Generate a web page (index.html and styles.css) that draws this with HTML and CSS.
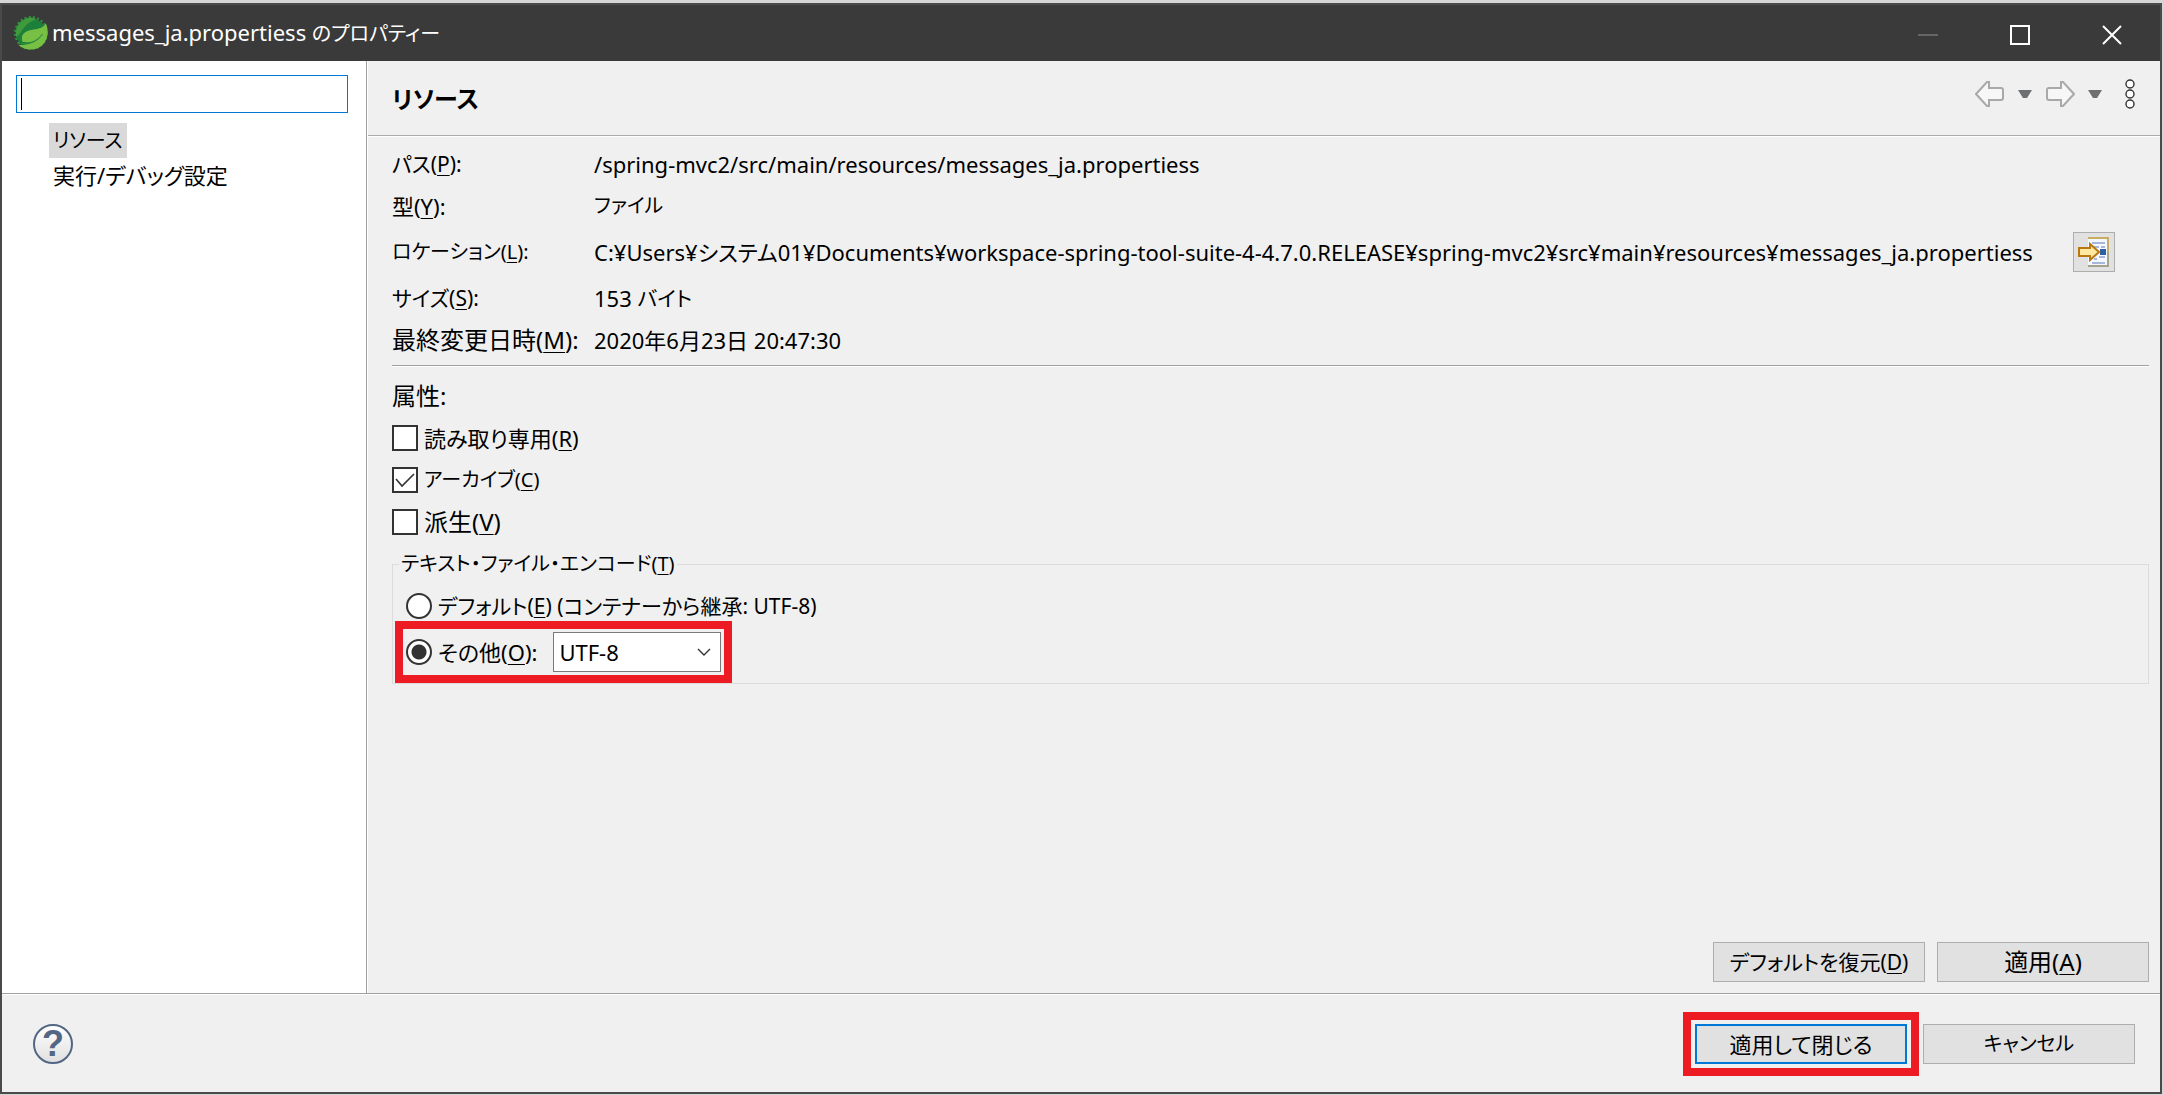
FILE: index.html
```
<!DOCTYPE html>
<html lang="ja">
<head>
  <meta charset="UTF-8" />
  <title>messages_ja.propertiess のプロパティー</title>
  <link rel="stylesheet" href="styles.css">
</head>
<body>

  <div class="dialog">
    <header class="titlebar">
      <svg class="logo" viewBox="0 0 32 32" aria-hidden="true">
        <circle cx="16" cy="16" r="14" fill="#1d7f3c" />
        <circle cx="16" cy="16" r="15" fill="none" stroke="#2f8f3c" stroke-width="2" stroke-dasharray="2 2" />
        <path d="M2 20 Q0 8 10 3 Q16 0 21 3 Q12 6 8 13 Q5 18 2 20 Z" fill="#3f9a3c" />
        <path d="M30 7 C33 14 32 22 27 27 C20 34 9 32 4 27 C12 28 21 26 27 17 C22 24 14 26 8 24 C6 17 11 14 18 13 C24 12 28 11 30 7 Z" fill="#78c043" />
        <path d="M27 17 C22 24 14 26 8 24 C6 17 11 14 18 13 C24 12 28 11 30 7 L31 15 Z" fill="#78c043" />
        <path d="M4 26 C14 27 22 24 27 17" fill="none" stroke="#2f8f3c" stroke-width="1" />
      </svg>
      <h1>messages_ja.propertiess <span class="kana">のプロパティー</span></h1>
      <div class="window-buttons">
        <button type="button" aria-label="最小化" disabled><svg viewBox="0 0 20 20"><path d="M0 10H20" stroke="#666" stroke-width="2" /></svg></button>
        <button type="button" aria-label="最大化"><svg viewBox="0 0 20 20"><rect x="1" y="1" width="18" height="18" fill="none" stroke="#fff" stroke-width="2" /></svg></button>
        <button type="button" aria-label="閉じる"><svg viewBox="0 0 20 20"><path d="M1 1L19 19M19 1L1 19" stroke="#fff" stroke-width="2" /></svg></button>
      </div>
    </header>

    <div class="body">
      <nav class="sidebar">
        <div class="filter"><input type="text" aria-label="フィルター入力"></div>
        <ul>
          <li><a href="#resource" class="selected kana">リソース</a></li>
          <li><a href="#debug">実行/デバッグ設定</a></li>
        </ul>
      </nav>

      <main id="resource">
        <div class="page-head">
          <h2>リソース</h2>
          <div class="toolbar">
            <button type="button" aria-label="戻る">
              <svg width="30" height="26" viewBox="0 0 30 26"><path d="M1 13L12 1H14V7H26Q28 7 28 9V17Q28 19 26 19H14V25H12Z" fill="#f7f7f7" stroke="#a9a9a9" stroke-width="2" /></svg>
            </button>
            <button type="button" aria-label="戻る履歴">
              <svg width="14" height="8" viewBox="0 0 14 8"><path d="M0 0H14L9 8H5Z" fill="#6e6f71" /></svg>
            </button>
            <button type="button" aria-label="進む">
              <svg width="30" height="26" viewBox="0 0 30 26"><path d="M29 13L18 1H16V7H4Q2 7 2 9V17Q2 19 4 19H16V25H18Z" fill="#f7f7f7" stroke="#a9a9a9" stroke-width="2" /></svg>
            </button>
            <button type="button" aria-label="進む履歴">
              <svg width="14" height="8" viewBox="0 0 14 8"><path d="M0 0H14L9 8H5Z" fill="#6e6f71" /></svg>
            </button>
            <button type="button" class="menu" aria-label="メニュー">
              <svg width="10" height="30" viewBox="0 0 10 30" fill="#fff" stroke="#333" stroke-width="1.4"><circle cx="5" cy="5" r="4" /><circle cx="5" cy="15" r="4" /><circle cx="5" cy="25" r="4" /></svg>
            </button>
          </div>
        </div>

        <div class="page">
          <dl class="info">
            <dt class="mixed">パス(<u>P</u>):</dt>
            <dd>/spring-mvc2/src/main/resources/messages_ja.propertiess</dd>
            <dt>型(<u>Y</u>):</dt>
            <dd class="kana">ファイル</dd>
            <dt class="tall kana">ロケーション(<u>L</u>):</dt>
            <dd class="tall location">
              <span>C:¥Users¥システム01¥Documents¥workspace-spring-tool-suite-4-4.7.0.RELEASE¥spring-mvc2¥src¥main¥resources¥messages_ja.propertiess</span>
              <button type="button" class="show-in" aria-label="システム・エクスプローラーに表示">
                <svg width="34" height="32" viewBox="0 0 34 32">
                  <rect x="11" y="1" width="21" height="30" fill="#f4f7fc" />
                  <path d="M11 2H31V31" fill="none" stroke="#c8ad62" stroke-width="2" />
                  <path d="M31 16V30H11" fill="none" stroke="#a6a38c" stroke-width="2" />
                  <path d="M15 7H28M17 11H22M24 11H28M22 21H28M17 23H20M15 27H28" stroke="#a8b6dc" stroke-width="2" />
                  <path d="M23 16H29" stroke="#2e5fa3" stroke-width="6" />
                  <path d="M2 12H13V8L22 16L13 24V20H2Z" fill="#ffe9a0" stroke="#b8780f" stroke-width="2" />
                </svg>
              </button>
            </dd>
            <dt class="mixed">サイズ(<u>S</u>):</dt>
            <dd>153 <span class="mixed">バイト</span></dd>
            <dt class="kanji">最終変更日時(<u>M</u>):</dt>
            <dd>2020年6月23日 20:47:30</dd>
          </dl>

          <div class="attributes">
            <p class="kanji">属性:</p>
            <label><input type="checkbox"><span>読み取り専用(<u>R</u>)</span></label>
            <label><input type="checkbox" checked><span class="kana">アーカイブ(<u>C</u>)</span></label>
            <label><input type="checkbox"><span class="kanji">派生(<u>V</u>)</span></label>
          </div>

          <fieldset>
            <legend class="kana">テキスト・ファイル・エンコード(<u>T</u>)</legend>
            <label><input type="radio" name="encoding"><span class="mixed">デフォルト(<u>E</u>) (コンテナーから継承: UTF-8)</span></label>
            <div class="other highlight">
              <label><input type="radio" name="encoding" checked><span>その他(<u>O</u>):</span></label>
              <select aria-label="エンコード">
                <option>UTF-8</option>
                <option>UTF-16</option>
                <option>US-ASCII</option>
              </select>
            </div>
          </fieldset>

          <div class="page-buttons">
            <button type="button" class="btn mixed">デフォルトを復元(<u>D</u>)</button>
            <button type="button" class="btn kanji">適用(<u>A</u>)</button>
          </div>
        </div>
      </main>
    </div>

    <footer>
      <button type="button" class="help" aria-label="ヘルプ">?</button>
      <div class="footer-buttons">
        <button type="button" class="btn primary highlight">適用して閉じる</button>
        <button type="button" class="btn kana">キャンセル</button>
      </div>
    </footer>
  </div>

</body>
</html>
```
FILE: styles.css
```
* {
  box-sizing: border-box;
}
body {
  margin: 0;
  padding: 3px 1px 1px 0;
  height: 100vh;
  background: #d6d6d6;
  color: #000;
  font-family: "Noto Sans", "Noto Sans CJK JP", sans-serif;
  font-size: 22px;
  line-height: 30px;
  font-feature-settings: "palt";
}
h1, h2, ul, dl, dd, p {
  margin: 0;
  padding: 0;
  font-weight: normal;
}
button, input, select {
  font: inherit;
  font-feature-settings: inherit;
  color: inherit;
}
button {
  padding: 0;
  border: none;
  background: none;
}
u {
  text-underline-offset: 3px;
  text-decoration-thickness: 1px;
}
.kana {
  font-size: 20px;
}
.mixed {
  font-size: 21px;
}
.kanji {
  font-size: 24px;
}

.dialog {
  display: flex;
  flex-direction: column;
  height: 100%;
  border: 2px solid #4a4a4a;
  background: #f0f0f0;
}

/* title bar */
.titlebar {
  display: flex;
  align-items: center;
  height: 56px;
  padding-left: 12px;
  background: #3a3a3a;
  color: #fff;
}
.logo {
  width: 34px;
  height: 34px;
}
.titlebar h1 {
  flex: 1;
  margin-left: 4px;
  font-size: 22px;
}
.titlebar h1 .kana {
  font-size: 20px;
}
.window-buttons {
  display: flex;
  padding-right: 2px;
}
.window-buttons button {
  width: 92px;
  height: 56px;
  padding-bottom: 2px;
}
.window-buttons svg {
  width: 20px;
  height: 20px;
  vertical-align: middle;
}

.body {
  display: flex;
  flex: 1;
  min-height: 0;
}

/* left tree */
.sidebar {
  width: 365px;
  padding: 14px 18px 0 14px;
  background: #fff;
  border-right: 1px solid #a0a0a0;
}
.filter {
  position: relative;
}
.filter input {
  display: block;
  width: 100%;
  height: 38px;
  padding: 0 6px;
  border: 1px solid #0078d7;
  outline: none;
}
.filter::after {
  content: "";
  position: absolute;
  left: 5px;
  top: 3px;
  width: 1px;
  height: 32px;
  background: #000;
}
.sidebar ul {
  margin: 10px 0 0 33px;
  list-style: none;
}
.sidebar a {
  display: inline-block;
  height: 35px;
  padding: 0 4px;
  line-height: 35px;
  color: #000;
  text-decoration: none;
}
.sidebar li {
  height: 35px;
}
.sidebar .selected {
  background: #d9d9d9;
}

/* right page */
main {
  display: flex;
  flex: 1;
  flex-direction: column;
  border-left: 1px solid #fff;
}
.page-head {
  display: flex;
  align-items: center;
  justify-content: space-between;
  height: 76px;
  padding: 2px 25px 0 24px;
  border-bottom: 2px groove #fff;
}
.page-head h2 {
  font-size: 24px;
  font-weight: bold;
}
.toolbar {
  display: flex;
  align-items: center;
  gap: 13px;
  margin-bottom: 10px;
}
.toolbar button {
  display: flex;
}
.toolbar .menu {
  margin-left: 10px;
}
.page {
  display: flex;
  flex: 1;
  flex-direction: column;
  padding: 6px 11px 11px 24px;
}
.info {
  display: grid;
  grid-template-columns: 202px 1fr;
  padding-bottom: 4px;
  border-bottom: 1px solid #a0a0a0;
  box-shadow: 0 1px #fff;
}
.info dt, .info dd {
  display: flex;
  align-items: center;
  min-height: 42px;
  white-space: pre;
}
.info .tall {
  min-height: 50px;
}
.info .location {
  justify-content: space-between;
  padding-right: 34px;
}
.show-in {
  display: flex;
  align-items: center;
  justify-content: center;
  width: 42px;
  height: 40px;
  background: #e1e1e1;
  border: 1px solid #adadad;
}

.attributes {
  padding-top: 9px;
}
.attributes p, .attributes label, fieldset > label {
  display: flex;
  align-items: center;
  height: 42px;
}
input[type="checkbox"], input[type="radio"] {
  appearance: none;
  flex: none;
  width: 26px;
  height: 26px;
  margin: 0 6px 0 0;
  border: 2px solid #333;
  background: #fff;
}
input[type="checkbox"]:checked {
  background: #fff url("data:image/svg+xml,%3Csvg xmlns='http://www.w3.org/2000/svg' viewBox='0 0 22 22'%3E%3Cpath d='M2 10L8 17L20 5' fill='none' stroke='%23333' stroke-width='1.6'/%3E%3C/svg%3E") center / 22px;
}
input[type="radio"] {
  border-radius: 50%;
}
input[type="radio"]:checked {
  background: radial-gradient(circle, #333 7px, #fff 8px);
}

fieldset {
  min-width: 0;
  margin: 0;
  padding: 0 0 8px 13px;
  border: 1px solid #dcdcdc;
}
legend {
  height: 42px;
  padding: 0 2px;
  margin-left: -7px;
  line-height: 42px;
}
.highlight {
  outline: 8px solid #ed1c24;
}
.other {
  display: inline-flex;
  align-items: center;
  height: 46px;
  margin-top: 2px;
  margin-left: -3px;
  padding: 0 3px;
  vertical-align: top;
}
.other label {
  display: flex;
  align-items: center;
}
.other select {
  appearance: none;
  width: 168px;
  height: 40px;
  margin-left: 16px;
  padding: 0 5px;
  border: 1px solid #7a7a7a;
  border-radius: 0;
  background: #fff url("data:image/svg+xml,%3Csvg xmlns='http://www.w3.org/2000/svg' viewBox='0 0 14 8'%3E%3Cpath d='M1 1L7 7L13 1' fill='none' stroke='%23333' stroke-width='1.4'/%3E%3C/svg%3E") no-repeat right 9px center / 14px 8px;
}

/* buttons */
.page-buttons {
  display: flex;
  gap: 12px;
  justify-content: flex-end;
  margin-top: auto;
}
.btn {
  width: 212px;
  height: 40px;
  background: #e1e1e1;
  border: 1px solid #adadad;
}
footer {
  display: flex;
  align-items: center;
  justify-content: space-between;
  height: 99px;
  padding: 1px 25px 0 31px;
  border-top: 1px solid #a0a0a0;
  box-shadow: inset 0 1px #fff;
}
.footer-buttons {
  display: flex;
  gap: 16px;
}
.primary {
  border: 2px solid #0078d7;
  outline-offset: 4px;
}
.help {
  width: 40px;
  height: 40px;
  border: 2px solid #536684;
  border-radius: 50%;
  background: linear-gradient(#fff, #e0e0e0);
  color: #536684;
  font-family: "Liberation Sans", sans-serif;
  font-size: 36px;
  font-weight: bold;
  line-height: 36px;
}
```
